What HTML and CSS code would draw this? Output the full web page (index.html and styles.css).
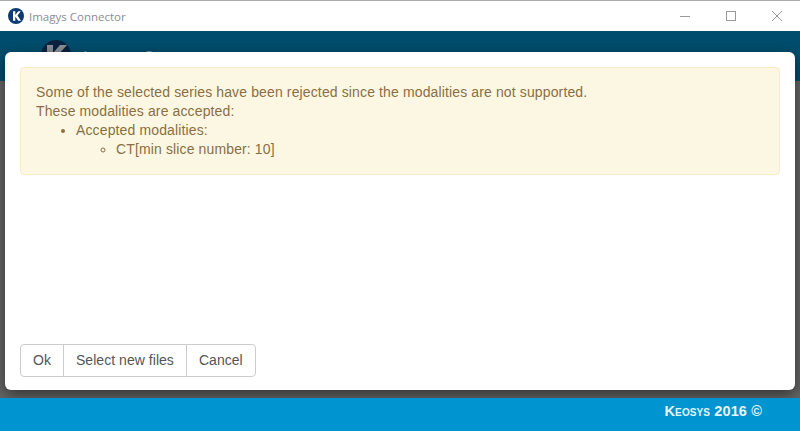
FILE: index.html
```html
<!DOCTYPE html>
<html lang="en">
<head>
<meta charset="utf-8">
<title>Imagys Connector</title>
<link rel="stylesheet" href="styles.css">
</head>
<body>
<div class="window">
  <header class="titlebar">
    <svg class="app-icon" viewBox="0 0 16 16" width="16" height="16" aria-hidden="true">
      <circle cx="8" cy="8" r="8" fill="#0d3b73"/>
      <path d="M5 3.2h2.3v3.9l2.9-3.9h2.6L9.5 7.6l3.5 5.2h-2.8L7.3 8.5v4.3H5z" fill="#fff"/>
    </svg>
    <span class="window-title">Imagys Connector</span>
    <div class="window-controls">
      <svg class="control" viewBox="0 0 46 30" aria-hidden="true"><path d="M18 15.5h10" stroke="#999" fill="none"/></svg>
      <svg class="control" viewBox="0 0 46 30" aria-hidden="true"><rect x="18.5" y="10.5" width="9" height="9" stroke="#999" fill="none"/></svg>
      <svg class="control" viewBox="0 0 46 30" aria-hidden="true"><path d="M18 10l10 10M28 10L18 20" stroke="#999" fill="none"/></svg>
    </div>
  </header>
  <main class="content">
    <div class="app-header">
      <svg class="brand-logo" viewBox="0 0 30 30" width="30" height="30" aria-hidden="true">
        <circle cx="15" cy="15" r="15" fill="#0a2340"/>
        <path d="M6 5h6v8l7-8h7l-9 10 9 11h-7l-7-9v9H6z" fill="#8a8f96"/>
      </svg>
      <span class="brand-name">Imagys Connector</span>
    </div>
    <div class="backdrop"></div>
    <section class="modal">
      <div class="alert">
        Some of the selected series have been rejected since the modalities are not supported.<br>
        These modalities are accepted:
        <ul class="list">
          <li>Accepted modalities:
            <ul class="sublist">
              <li>CT[min slice number: 10]</li>
            </ul>
          </li>
        </ul>
      </div>
      <div class="btn-group">
        <button class="btn" type="button">Ok</button>
        <button class="btn" type="button">Select new files</button>
        <button class="btn" type="button">Cancel</button>
      </div>
    </section>
  </main>
  <footer class="footer"><span class="copyright">Keosys 2016 ©</span></footer>
</div>
</body>
</html>
```
FILE: styles.css
```css
* { box-sizing: border-box; }
html, body { margin: 0; height: 100%; }
body {
  font-family: "Liberation Sans", Arial, sans-serif;
  font-size: 14px;
  line-height: 19px;
  letter-spacing: .13px;
  color: #555;
  overflow: hidden;
}
.window { display: flex; flex-direction: column; height: 431px; background: #666; }
.titlebar {
  height: 31px;
  flex: none;
  display: flex;
  align-items: center;
  background: #fff;
  border-top: 1px solid #aaa;
  padding-left: 8px;
}
.app-icon { flex: none; margin-bottom: 1px; }
.window-title {
  margin-left: 5px;
  font-family: "Open Sans", "Noto Sans", sans-serif;
  font-size: 11.5px;
  letter-spacing: 0;
  color: #8b8b98;
}
.window-controls { margin-left: auto; display: flex; }
.control { width: 46px; height: 30px; display: block; }
.content { flex: 1; position: relative; overflow: hidden; }
.app-header {
  height: 50px;
  background: #004d6d;
  display: flex;
  align-items: flex-start;
  padding: 9px 0 0 41px;
  gap: 12px;
}
.brand-name { font-size: 17px; line-height: 30px; padding-top: 3px; letter-spacing: 0; color: #7a8e98; }
.backdrop { position: absolute; inset: 0; }
.modal {
  position: absolute;
  left: 5px;
  top: 21px;
  width: 790px;
  height: 338px;
  background: #fff;
  border-radius: 6px;
  box-shadow: 0 5px 15px rgba(0, 0, 0, .5);
  padding: 15px;
  display: flex;
  flex-direction: column;
}
.alert {
  height: 108px;
  padding: 15px;
  background: #fcf7e3;
  border: 1px solid #faebcc;
  border-radius: 4px;
  color: #8a6f42;
}
.list { margin: 0; padding-left: 40px; list-style: disc; }
.sublist { margin: 0; padding-left: 40px; list-style: circle; }
.btn-group { margin-top: auto; margin-bottom: -2px; display: flex; }
.btn {
  height: 33px;
  padding: 5px 12px;
  font: inherit;
  letter-spacing: .04px;
  color: #555;
  background: #fff;
  border: 1px solid #ccc;
  margin-left: -1px;
}
.btn:first-child { margin-left: 0; border-radius: 4px 0 0 4px; }
.btn:last-child { border-radius: 0 4px 4px 0; }
.footer {
  height: 33px;
  flex: none;
  position: relative;
  background: #0094d0;
  display: flex;
  justify-content: flex-end;
  padding: 5px 38px 0 0;
}
.copyright {
  font-weight: bold;
  font-size: 14.5px;
  font-variant: small-caps;
  line-height: 16px;
  letter-spacing: .12px;
  color: #e6f4fb;
}
```
